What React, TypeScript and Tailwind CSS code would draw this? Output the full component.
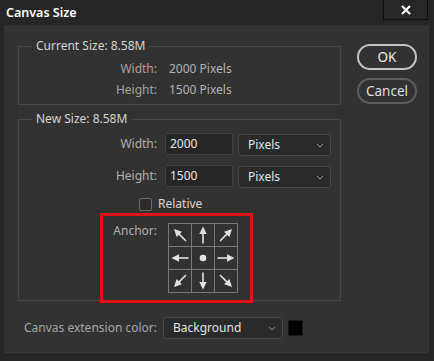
import React from 'react';

const font = { fontFamily: '"Noto Sans", "Open Sans", sans-serif' };

// arrow pointing up, rotated per cell
const Arrow = ({ deg }: { deg: number }) => (
  <svg width="22" height="22" viewBox="0 0 22 22">
    <g transform={`rotate(${deg} 11 11)`} fill="#e2e2e2" stroke="#e2e2e2">
      <line x1="11" y1="19.5" x2="11" y2="8" strokeWidth="1.6" />
      <polygon points="11,2.5 7.3,10 14.7,10" stroke="none" />
    </g>
  </svg>
);

const Dot = () => (
  <svg width="22" height="22" viewBox="0 0 22 22">
    <circle cx="11" cy="11" r="3.3" fill="#e2e2e2" />
  </svg>
);

const Chevron = () => (
  <svg width="8" height="5" viewBox="0 0 8 5" className="ml-auto">
    <path d="M1 1 L4 4 L7 1" fill="none" stroke="#9a9a9a" strokeWidth="1" />
  </svg>
);

const Select = ({ value, w }: { value: string; w: string }) => (
  <div className={`${w} h-[22px] flex items-center pl-[9px] pr-[6px] bg-[#2a2a2a] border border-[#474747] rounded-[3px] text-[12px] text-[#e4e4e4]`}>
    <span>{value}</span>
    <Chevron />
  </div>
);

const cells = [-45, 0, 45, -90, null, 90, -135, 180, 135];

export default function App() {
  return (
    <div className="w-[434px] h-[361px] bg-[#262626] flex flex-col overflow-hidden" style={font}>
      {/* title bar */}
      <div className="h-[25px] flex items-start shrink-0">
        <span className="ml-[6px] mt-[5px] text-[12.5px] leading-[16px] font-semibold text-white">Canvas Size</span>
        <div className="ml-auto mr-[6px] w-[45px] h-[20px] border border-[#0e0e0e] border-t-0 bg-[#272727] flex items-center justify-center">
          <svg width="10" height="10" viewBox="0 0 10 10">
            <path d="M1 1 L9 9 M9 1 L1 9" stroke="#ffffff" strokeWidth="2.2" />
          </svg>
        </div>
      </div>

      {/* body */}
      <div className="ml-[4px] mr-[5px] h-[330px] bg-[#323232] border-b border-[#1c1c1c] pl-[14px] pt-[13px] flex">
        <div className="w-[323px] flex flex-col">
          {/* current size */}
          <fieldset className="border border-[#464646] pb-[4px]">
            <legend className="ml-[13px] px-[4px] text-[12px] leading-[16px] text-[#d4d4d4]">Current Size: 8.58M</legend>
            <div className="pt-[4px] flex flex-col text-[12px]">
              <div className="h-[21px] flex items-center">
                <span className="w-[138px] text-right text-[#a2a2a2]">Width:</span>
                <span className="ml-[12px] text-[#b4b4b4]">2000 Pixels</span>
              </div>
              <div className="h-[21px] flex items-center">
                <span className="w-[138px] text-right text-[#a2a2a2]">Height:</span>
                <span className="ml-[12px] text-[#b4b4b4]">1500 Pixels</span>
              </div>
            </div>
          </fieldset>

          {/* new size */}
          <fieldset className="mt-[6px] border border-[#464646]">
            <legend className="ml-[13px] px-[4px] text-[12px] leading-[16px] text-[#d4d4d4]">New Size: 8.58M</legend>
            <div className="pt-[6px] flex flex-col text-[12px]">
              <div className="flex items-start">
                <span className="w-[138px] h-[22px] flex items-center justify-end text-[#b0b0b0]">Width:</span>
                <div className="ml-[8px] w-[68px] h-[22px] flex items-center pl-[4px] bg-[#262626] border border-[#404040] rounded-[2px] text-[#e6e6e6]">2000</div>
                <div className="ml-[5px] mt-px"><Select value="Pixels" w="w-[93px]" /></div>
              </div>
              <div className="mt-[9px] flex items-start">
                <span className="w-[138px] h-[22px] flex items-center justify-end text-[#b0b0b0]">Height:</span>
                <div className="ml-[8px] w-[68px] h-[22px] flex items-center pl-[4px] bg-[#262626] border border-[#404040] rounded-[2px] text-[#e6e6e6]">1500</div>
                <div className="ml-[5px] mt-px"><Select value="Pixels" w="w-[93px]" /></div>
              </div>
              <div className="mt-[8px] h-[16px] flex items-center">
                <div className="ml-[120px] w-[13px] h-[13px] border border-[#6a6a6a] rounded-[2px] bg-[#2c2c2c] mt-[1px]" />
                <span className="ml-[6px] text-[#d6d6d6]">Relative</span>
              </div>

              {/* anchor */}
              <div className="mt-px -mb-[3px] ml-[81px] w-[153px] border-[3px] border-[#e0111b] pt-[7px] pb-[7px] flex items-start">
                <span className="w-[54px] text-right leading-[14px] mt-[1px] text-[#b0b0b0]">Anchor:</span>
                <div className="ml-[11px] grid grid-cols-3 border-l border-t border-[#7a7a7a] w-[70px]">
                  {cells.map((d, i) => (
                    <div key={i} className="w-[23px] h-[23px] border-r border-b border-[#7a7a7a] flex items-center justify-center">
                      {d === null ? <Dot /> : <Arrow deg={d} />}
                    </div>
                  ))}
                </div>
              </div>
            </div>
          </fieldset>

          {/* extension colour */}
          <div className="mt-[16px] flex items-center text-[12px]">
            <span className="w-[139px] text-right text-[#a6a6a6]">Canvas extension color:</span>
            <div className="ml-[6px]"><Select value="Background" w="w-[120px]" /></div>
            <div className="ml-[5px] w-[15px] h-[16px] bg-black border border-[#1a1a1a]" />
          </div>
        </div>

        {/* buttons */}
        <div className="ml-[16px] pt-[6px] flex flex-col gap-[8px]">
          <div className="w-[60px] h-[26px] rounded-full border-2 border-[#c4c4c4] flex items-center justify-center text-[13.5px] text-[#ececec]">OK</div>
          <div className="w-[60px] h-[26px] rounded-full border-2 border-[#5e5e5e] flex items-center justify-center text-[13.5px] text-[#dedede]">Cancel</div>
        </div>
      </div>
    </div>
  );
}
